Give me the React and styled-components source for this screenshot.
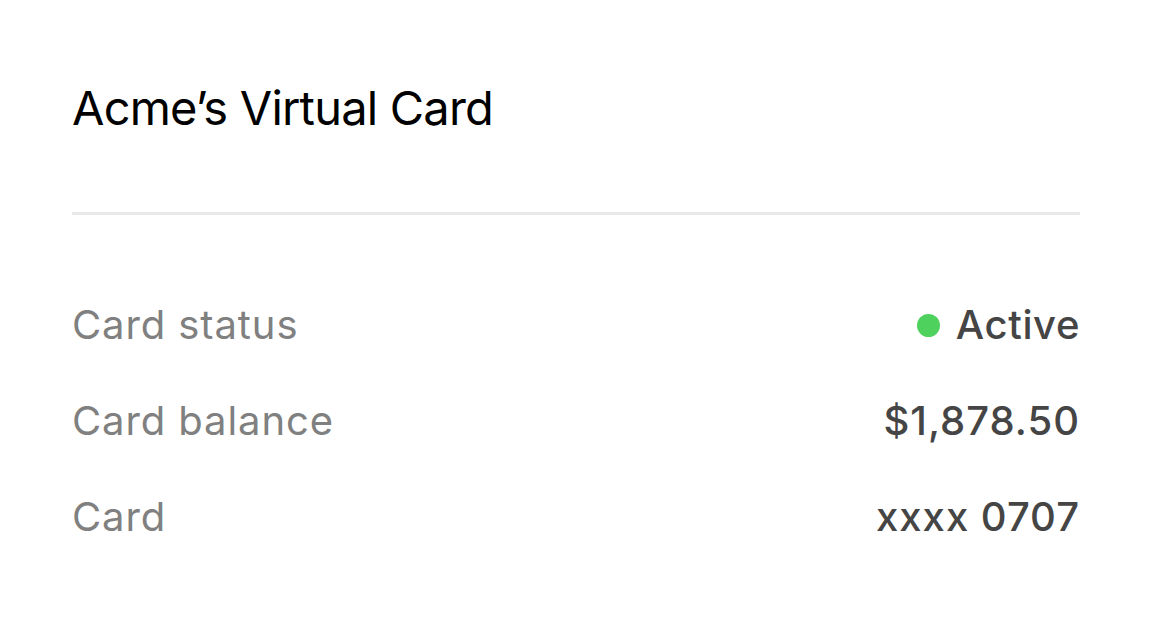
import React from "react";
import styled, { createGlobalStyle } from "styled-components";

const GlobalStyle = createGlobalStyle`
  html, body {
    margin: 0;
    padding: 0;
    background: #ffffff;
  }
  body {
    font-family: Inter, "Noto Sans", sans-serif;
    -webkit-font-smoothing: antialiased;
  }
`;

const Card = styled.div`
  width: 1152px;
  height: 624px;
  box-sizing: border-box;
  padding: 78px 72px 0;
  display: flex;
  flex-direction: column;
`;

const Title = styled.h1`
  margin: 0;
  font-size: 47px;
  line-height: 60px;
  font-weight: 400;
  color: #000;
  letter-spacing: -0.8px;
`;

const Divider = styled.hr`
  margin: 74px 0 0;
  border: none;
  height: 3px;
  background: #e9e9e9;
`;

const Details = styled.div`
  display: flex;
  flex-direction: column;
  gap: 48px;
  padding-top: 86px;
`;

const Row = styled.div`
  display: flex;
  justify-content: space-between;
  align-items: center;
  font-size: 40px;
  line-height: 48px;
`;

const Label = styled.span`
  color: #808080;
  letter-spacing: 0.9px;
`;

const Value = styled.span`
  display: flex;
  align-items: center;
  gap: 16px;
  color: #454545;
  font-weight: 500;
  letter-spacing: ${p => (p.status ? "0.6px" : "1px")};
`;

const Dot = styled.span`
  width: 23px;
  height: 23px;
  border-radius: 50%;
  background: #4fd15e;
`;

const rows = [
  { label: "Card status", value: "Active", status: true },
  { label: "Card balance", value: "$1,878.50" },
  { label: "Card", value: "xxxx 0707" },
];

const App = () => (
  <>
    <GlobalStyle />
    <Card>
      <Title>Acme’s Virtual Card</Title>
      <Divider />
      <Details>
        {rows.map(r => (
          <Row key={r.label}>
            <Label>{r.label}</Label>
            <Value status={r.status}>
              {r.status && <Dot />}
              {r.value}
            </Value>
          </Row>
        ))}
      </Details>
    </Card>
  </>
);

export default App;
